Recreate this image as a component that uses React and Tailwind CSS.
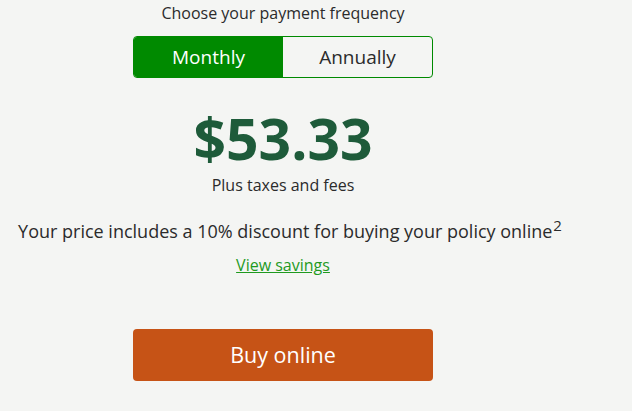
import React, { useState } from 'react';

const App = () => {
  const [freq, setFreq] = useState('monthly');

  return (
    <div className="min-h-screen w-full bg-[#f4f5f3] text-[#2b2b2b]" style={{ fontFamily: '"Open Sans", "Noto Sans", sans-serif' }}>
      <div className="w-[566px] flex flex-col items-center text-center">
        <p className="text-[16px] leading-[26px]">Choose your payment frequency</p>

        <div className="mt-[10px] flex w-[300px] h-[42px] rounded-[4px] border border-[#008a00] overflow-hidden">
          <button
            onClick={() => setFreq('monthly')}
            className={`flex-1 text-[19px] ${freq === 'monthly' ? 'bg-[#008a00] text-white' : 'bg-transparent text-[#2b2b2b]'}`}
          >
            Monthly
          </button>
          <button
            onClick={() => setFreq('annually')}
            className={`flex-1 text-[19px] ${freq === 'annually' ? 'bg-[#008a00] text-white' : 'bg-transparent text-[#2b2b2b]'}`}
          >
            Annually
          </button>
        </div>

        <p className="mt-[30px] text-[57px] leading-[60px] font-bold text-[#1e5b3a]">$53.33</p>
        <p className="mt-[6px] text-[16px] leading-[22px]">Plus taxes and fees</p>

        <p className="mt-[22px] text-[18px] leading-[26px] whitespace-nowrap pl-[14px]">
          Your price includes a 10% discount for buying your policy online<sup className="text-[15px] ml-px">2</sup>
        </p>

        <a href="#" className="mt-[10px] text-[16px] leading-[22px] text-[#1f9a1f] underline">View savings</a>

        <button className="mt-[53px] w-[300px] h-[52px] rounded-[4px] bg-[#c65316] text-white text-[21.5px]">
          Buy online
        </button>
      </div>
    </div>
  );
};

export default App;
